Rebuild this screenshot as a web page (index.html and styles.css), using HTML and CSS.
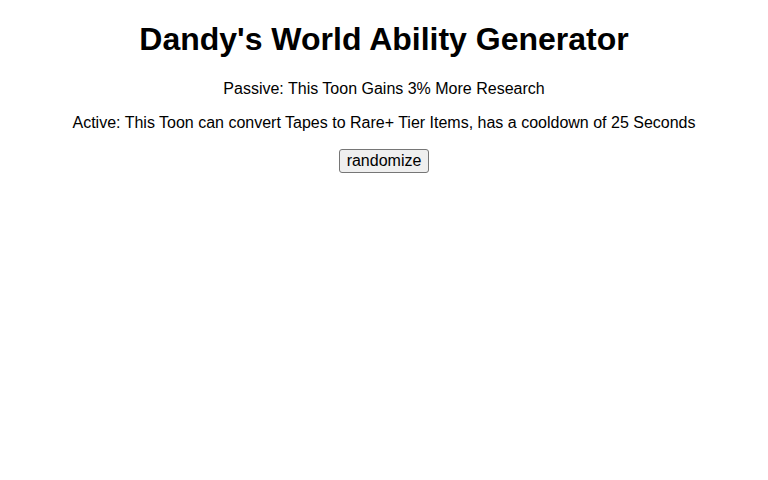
FILE: index.html
```html
<!DOCTYPE html>
<html lang="en">
<head>
  <meta charset="UTF-8">
  <title>Dandy's World Ability Generator</title>
  <link rel="stylesheet" href="styles.css">
</head>
<body>
  <div class="generator">
    <h1 class="title">Dandy's World Ability Generator</h1>
    <p class="passive">Passive: This Toon Gains 3% More Research</p>
    <p class="active">Active: This Toon can convert Tapes to Rare+ Tier Items, has a cooldown of 25 Seconds</p>
    <button class="randomBtn">randomize</button>
  </div>
</body>
</html>
```

FILE: styles.css
```css
body{
  margin: 0;
  font-family: "Liberation Sans", Arial, sans-serif;
  color: #000;
  background: #fff;
}
.generator{
  text-align: center;
}
.title{
  font-size: 32px;
  margin: 21px 0 22px;
}
.passive, .active{
  font-size: 16px;
  margin: 16px 0;
}
.randomBtn{
  font-family: inherit;
  font-size: 16px;
  padding: 2px 7px;
  margin-top: 1px;
  color: #000;
  background: #efefef;
  border: 1px solid #767676;
  border-radius: 3px;
}
```
